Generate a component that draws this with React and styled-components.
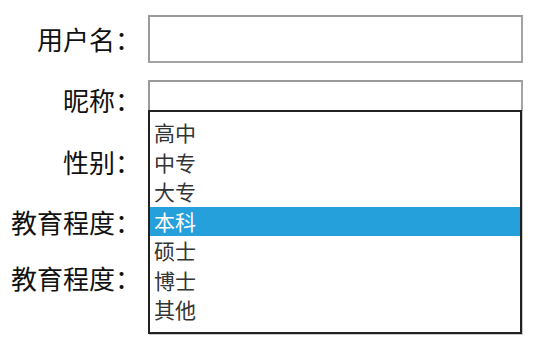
import React from 'react';
import styled, { createGlobalStyle } from 'styled-components';

const GlobalStyle = createGlobalStyle`
  html, body {
    margin: 0;
    padding: 0;
    background: #fff;
  }
  body {
    font-family: "Noto Sans CJK SC", "Noto Sans", sans-serif;
    color: #111;
  }
`;

const options = ['高中', '中专', '大专', '本科', '硕士', '博士', '其他'];

const fields = [
  { label: '用户名：', h: 61, inputH: 48 },
  { label: '昵称：', h: 62, inputH: 40 },
  { label: '性别：', h: 62 },
  { label: '教育程度：', h: 58 },
  { label: '教育程度：', h: 54 },
];

const App = () => {
  return (
    <>
      <GlobalStyle />
      <Form>
        {fields.map((f, i) => (
          <Row key={i} $h={f.h}>
            <Label>{f.label}</Label>
            {f.inputH && <TextInput type='text' $h={f.inputH} />}
          </Row>
        ))}
        <DropList>
          {options.map((opt) => (
            <Option key={opt} $active={opt === '本科'}>
              {opt}
            </Option>
          ))}
        </DropList>
      </Form>
    </>
  );
};

const Form = styled.form`
  position: relative;
  box-sizing: border-box;
  padding-top: 8px;
  width: 535px;
  height: 344px;
`;

const Row = styled.div`
  display: flex;
  align-items: center;
  height: ${(p) => p.$h}px;
`;

const Label = styled.label`
  width: 141px;
  margin-right: 7px;
  text-align: right;
  font-size: 26px;
  line-height: 1;
  white-space: nowrap;
  color: #111;
`;

const TextInput = styled.input`
  box-sizing: border-box;
  width: 375px;
  height: ${(p) => p.$h}px;
  border: 2px solid #a4a4a4;
  border-top-color: #9a9a9a;
  border-left-color: #9a9a9a;
  background: #fff;
  padding: 0 6px;
  font: inherit;
  outline: none;
`;

const DropList = styled.ul`
  position: absolute;
  left: 148px;
  top: 110px;
  box-sizing: border-box;
  width: 374px;
  height: 224px;
  margin: 0;
  padding: 6px 0 0;
  list-style: none;
  border: 2px solid #222;
  background: #fff;
  box-shadow: 1px 1px 0 #c8c8c8;
`;

const Option = styled.li`
  height: 29.5px;
  line-height: 29.5px;
  padding-left: 4px;
  font-size: 21px;
  color: ${(p) => (p.$active ? '#fff' : '#333')};
  background: ${(p) => (p.$active ? '#26a0da' : 'transparent')};
`;

export default App;
